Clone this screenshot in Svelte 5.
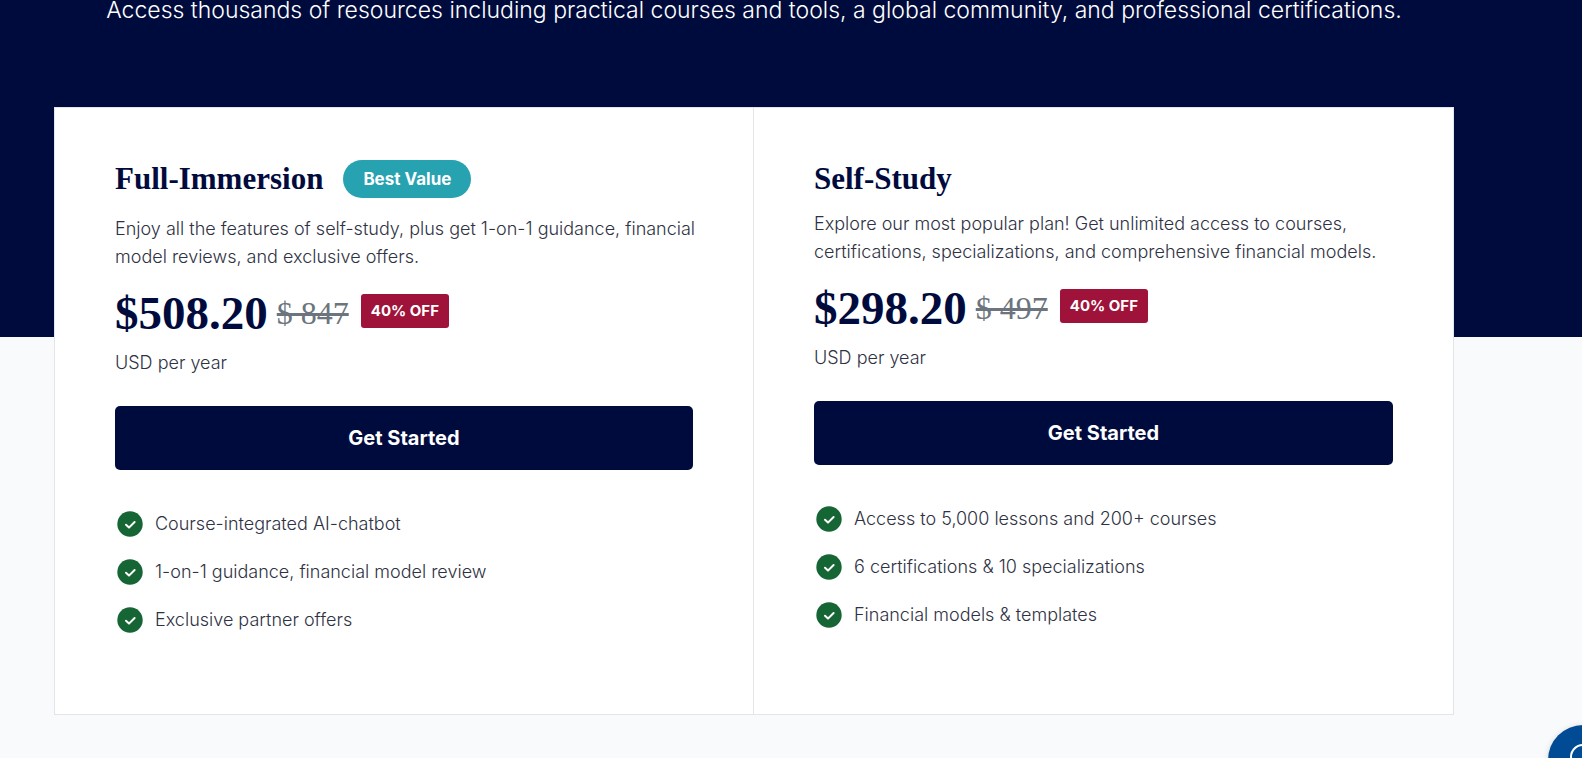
<script>
	const plans = [
		{
			name: "Full-Immersion",
			badge: "Best Value",
			text: "Enjoy all the features of self-study, plus get 1-on-1 guidance, financial model reviews, and exclusive offers.",
			price: "$508.20",
			old: "$ 847",
			off: "40% OFF",
			features: [
				"Course-integrated AI-chatbot",
				"1-on-1 guidance, financial model review",
				"Exclusive partner offers",
			],
		},
		{
			name: "Self-Study",
			badge: "",
			text: "Explore our most popular plan! Get unlimited access to courses, certifications, specializations, and comprehensive financial models.",
			price: "$298.20",
			old: "$ 497",
			off: "40% OFF",
			features: [
				"Access to 5,000 lessons and 200+ courses",
				"6 certifications & 10 specializations",
				"Financial models & templates",
			],
		},
	];
</script>

<main>
	<section class="hero">
		<p>Access thousands of resources including practical courses and tools, a global community, and professional certifications.</p>
	</section>

	<section class="plans">
		{#each plans as plan}
			<article class="plan">
				<header>
					<h2>{plan.name}</h2>
					{#if plan.badge}<span class="badge">{plan.badge}</span>{/if}
				</header>
				<p class="text">{plan.text}</p>
				<div class="prices">
					<strong>{plan.price}</strong>
					<del>{plan.old}</del>
					<span class="off">{plan.off}</span>
				</div>
				<p class="period">USD per year</p>
				<button type="button">Get Started</button>
				<ul>
					{#each plan.features as feature}
						<li>
							<svg viewBox="0 0 30 30" aria-hidden="true">
								<circle cx="15" cy="15" r="12.7" />
								<path d="M11 15.8l3 2.8 5.6-5.6" />
							</svg>
							{feature}
						</li>
					{/each}
				</ul>
			</article>
		{/each}
	</section>

	<button class="chat" type="button" aria-label="Open chat">
		<svg viewBox="0 0 32 32" aria-hidden="true">
			<path d="M16 4a12 12 0 1 0 6 22.400l6 1.600-1.600-6A12 12 0 0 0 16 4z" />
		</svg>
	</button>
</main>

<style>
	:global(body) {
		margin: 0;
		background: #f9fafc;
	}
	main {
		font-family: Inter, "Liberation Sans", sans-serif;
		color: #2f3244;
	}
	p, h2, ul {
		margin: 0;
		padding: 0;
	}
	.hero {
		background: #000b3d;
		color: #fff;
		padding: 0 128px 317px 54px;
	}
	.hero p {
		font-size: 23px;
		font-weight: 300;
		line-height: 20px;
		text-align: center;
	}
	.plans {
		display: grid;
		grid-template-columns: 1fr 1fr;
		margin: -230px 128px 0 54px;
		background: #fff;
		border: 1px solid #e2e5ea;
	}
	.plan {
		padding: 52px 60px 80px;
	}
	.plan:first-child {
		border-right: 1px solid #e2e5ea;
	}
	header {
		display: flex;
		align-items: flex-start;
		gap: 20px;
		margin-bottom: 12px;
	}
	h2 {
		font: bold 31px/38px "Liberation Serif", serif;
		color: #000b3d;
	}
	.badge {
		margin-bottom: 5px;
		padding: 0 20px;
		border-radius: 19px;
		background: #26a2b1;
		color: #fff;
		font-size: 17px;
		font-weight: 700;
		line-height: 38px;
	}
	.text, .period, li {
		font-size: 18px;
		font-weight: 300;
		line-height: 28px;
	}
	.text {
		margin-right: -10px;
	}
	.prices {
		display: flex;
		align-items: center;
		margin: 16px 0 9px;
		font-family: "Liberation Serif", serif;
	}
	.prices strong {
		font-size: 47px;
		line-height: 53px;
		color: #000b3d;
	}
	.prices del {
		margin: 0 12px 0 9px;
		font-size: 32px;
		color: #6c757d;
		text-decoration-thickness: 3px;
	}
	.off {
		margin-bottom: 5px;
		padding: 0 10px;
		border-radius: 3px;
		background: #9f1239;
		color: #fff;
		font: bold 15px/34px Inter, "Liberation Sans", sans-serif;
	}
	.plan button {
		display: block;
		width: 100%;
		margin: 29px 0 40px;
		padding: 0;
		border: 0;
		border-radius: 5px;
		background: #000b3d;
		color: #fff;
		font: 700 20px/64px Inter, "Liberation Sans", sans-serif;
		cursor: pointer;
	}
	ul {
		display: grid;
		gap: 20px;
		list-style: none;
	}
	li {
		display: flex;
		align-items: center;
		gap: 10px;
	}
	li svg {
		width: 30px;
		height: 30px;
		margin: -1px 0;
	}
	li circle {
		fill: #166534;
	}
	li path {
		fill: none;
		stroke: #fff;
		stroke-width: 2;
		stroke-linecap: round;
		stroke-linejoin: round;
	}
	.chat {
		position: fixed;
		right: -36px;
		bottom: -37px;
		width: 70px;
		height: 70px;
		padding: 16px 19px 22px;
		border: 0;
		border-radius: 50%;
		background: #004b93;
		box-shadow: 0 1px 6px #00000026;
		cursor: pointer;
	}
	.chat svg {
		display: block;
		width: 32px;
		height: 32px;
		fill: none;
		stroke: #fff;
		stroke-width: 2;
	}
</style>
